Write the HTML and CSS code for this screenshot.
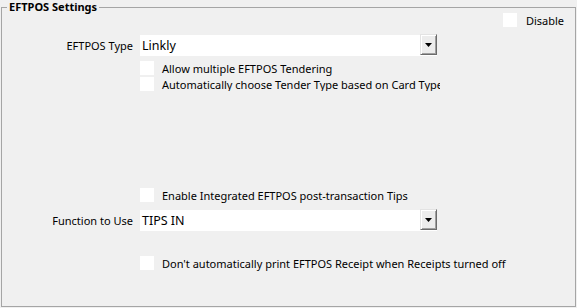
FILE: index.html
```html
<!DOCTYPE html>
<html>
<head>
<meta charset="utf-8">
<link rel="stylesheet" href="styles.css">
</head>
<body>
<fieldset class="group">
  <legend class="title">EFTPOS Settings</legend>
  <div class="form">
    <div class="disable-row">
      <label class="check"><span class="box"></span><span class="txt">Disable</span></label>
    </div>

    <span class="lbl row-type">EFTPOS Type</span>
    <div class="combo row-type">
      <span class="val">Linkly</span>
      <span class="btn"><svg width="7" height="4" viewBox="0 0 7 4"><path d="M0 0H7L3.5 4Z" fill="#000"/></svg></span>
    </div>

    <label class="check ctl row-allow"><span class="box"></span><span class="txt">Allow multiple EFTPOS Tendering</span></label>
    <label class="check ctl row-auto clip"><span class="box"></span><span class="txt">Automatically choose Tender Type based on Card Type</span></label>

    <label class="check ctl row-tips"><span class="box"></span><span class="txt">Enable Integrated EFTPOS post-transaction Tips</span></label>

    <span class="lbl row-func">Function to Use</span>
    <div class="combo row-func">
      <span class="val">TIPS IN</span>
      <span class="btn"><svg width="7" height="4" viewBox="0 0 7 4"><path d="M0 0H7L3.5 4Z" fill="#000"/></svg></span>
    </div>

    <label class="check ctl row-print"><span class="box"></span><span class="txt">Don't automatically print EFTPOS Receipt when Receipts turned off</span></label>
  </div>
</fieldset>
</body>
</html>
```

FILE: styles.css
```css
html, body {
  margin: 0;
  padding: 0;
  background: #f0f0f0;
}
body {
  width: 577px;
  height: 308px;
  overflow: hidden;
  font-family: "Noto Sans", "DejaVu Sans", sans-serif;
  font-size: 11px;
  color: #000;
}
.group {
  box-sizing: border-box;
  margin: 0 1px;
  width: 575px;
  height: 307px;
  border: 1px solid #a5a5a5;
  padding: 0;
  min-width: 0;
}
.title {
  margin-left: 5px;
  padding: 0 2px;
  font-weight: bold;
  font-size: 11px;
  line-height: 14px;
}
.form {
  display: grid;
  grid-template-columns: 131px 1fr;
  column-gap: 7px;
  align-items: center;
}
.disable-row {
  grid-column: 1 / 3;
  display: flex;
  justify-content: flex-end;
  padding-right: 11px;
  margin-top: -1px;
}
.check {
  display: flex;
  align-items: center;
  height: 14px;
  white-space: nowrap;
}
.box {
  flex: none;
  width: 14px;
  height: 14px;
  background: #fff;
  margin-right: 8px;
}
.disable-row .box { margin-right: 9px; }
.ctl { grid-column: 2; }
.clip {
  width: 300px;
  overflow: hidden;
}
.lbl {
  grid-column: 1;
  text-align: right;
  white-space: nowrap;
}
.combo {
  grid-column: 2;
  display: flex;
  align-items: stretch;
  width: 297px;
  height: 21px;
  background: #fff;
}
.val {
  flex: 1;
  padding-left: 2px;
  font-size: 12.5px;
  line-height: 21px;
}
.btn {
  box-sizing: border-box;
  flex: none;
  width: 17px;
  height: 21px;
  margin-top: -1px;
  background: #ececec;
  border: 1px solid;
  border-color: #e3e3e3 #6b6b6b #6b6b6b #e3e3e3;
  box-shadow: inset 1px 1px #fff, inset -1px -1px #a0a0a0;
  display: flex;
  align-items: center;
  justify-content: center;
  padding-top: 1px;
}
.row-type { margin-top: 8px; }
.row-allow { margin-top: 5px; }
.row-auto { margin-top: 2px; }
.row-tips { margin-top: 97px; }
.row-func { margin-top: 8px; }
.row-print { margin-top: 25px; }
```
